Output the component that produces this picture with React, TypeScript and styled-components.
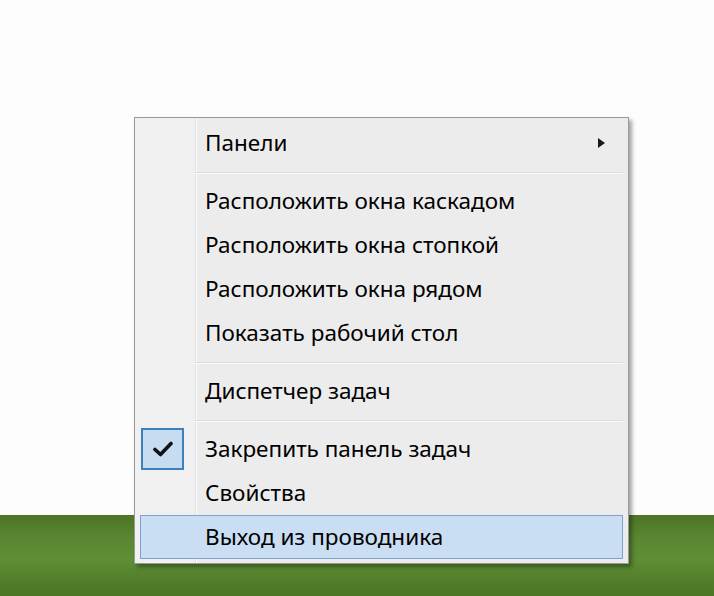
import React from 'react';
import styled, { createGlobalStyle } from 'styled-components';

const GlobalStyle = createGlobalStyle`
  html, body {
    margin: 0;
    padding: 0;
    background: #fdfdfd;
  }
  body {
    font-family: "Noto Sans", "Open Sans", "DejaVu Sans", sans-serif;
  }
`;

const Desktop = styled.div`
  position: relative;
  width: 714px;
  height: 596px;
  overflow: hidden;
  display: flex;
  flex-direction: column;
`;

const WhiteArea = styled.div`
  height: 515px;
  background: #fdfdfd;
`;

const GreenArea = styled.div`
  flex: 1;
  background:
    linear-gradient(180deg, #4d7526 0%, #5a8832 30%, #5e8e35 55%, #527f2b 80%, #4b7725 100%);
`;

const Menu = styled.div`
  position: absolute;
  left: 134px;
  top: 117px;
  width: 495px;
  box-sizing: border-box;
  padding: 3px 5px 4px 5px;
  border: 1px solid #9a9a9a;
  background: linear-gradient(
    to right,
    #f0f0f0 0,
    #f0f0f0 60px,
    #e0e0e0 60px,
    #e0e0e0 61px,
    #fbfbfb 61px,
    #fbfbfb 62px,
    #ececec 62px
  );
  box-shadow: 3px 3px 4px rgba(0, 0, 0, 0.35);
`;

const Item = styled.div<{ $active?: boolean }>`
  height: 44px;
  box-sizing: border-box;
  display: grid;
  grid-template-columns: 44px 1fr auto;
  align-items: center;
  border: 1px solid ${p => (p.$active ? '#7da2ce' : 'transparent')};
  background: ${p => (p.$active ? '#c9def3' : 'transparent')};
`;

const Gutter = styled.div<{ $checked?: boolean }>`
  width: 43px;
  height: 42px;
  box-sizing: border-box;
  display: flex;
  align-items: center;
  justify-content: center;
  border: 2px solid ${p => (p.$checked ? '#3d80bd' : 'transparent')};
  background: ${p => (p.$checked ? '#c6ddf1' : 'transparent')};
`;

const Label = styled.span`
  padding-left: 20px;
  font-size: 22.5px;
  line-height: 1;
  color: #000;
  white-space: nowrap;
`;

const Arrow = styled.span`
  width: 0;
  height: 0;
  margin-right: 17px;
  border-top: 5.5px solid transparent;
  border-bottom: 5.5px solid transparent;
  border-left: 7px solid #1a1a1a;
`;

const Separator = styled.div`
  height: 14px;
  display: flex;
  align-items: center;
  padding-left: 55px;

  &::after {
    content: '';
    flex: 1;
    height: 1px;
    background: #dcdcdc;
    box-shadow: 0 1px 0 #fafafa;
  }
`;

const Check = () => (
  <svg width="20" height="16" viewBox="0 0 20 16">
    <path d="M2 8.5 L7.5 13.5 L18 2.5" fill="none" stroke="#111" strokeWidth="3.6" strokeLinecap="round" strokeLinejoin="round" />
  </svg>
);

type Entry =
  | { kind: 'sep' }
  | { kind: 'item'; label: string; checked?: boolean; submenu?: boolean; active?: boolean };

const entries: Entry[] = [
  { kind: 'item', label: 'Панели', submenu: true },
  { kind: 'sep' },
  { kind: 'item', label: 'Расположить окна каскадом' },
  { kind: 'item', label: 'Расположить окна стопкой' },
  { kind: 'item', label: 'Расположить окна рядом' },
  { kind: 'item', label: 'Показать рабочий стол' },
  { kind: 'sep' },
  { kind: 'item', label: 'Диспетчер задач' },
  { kind: 'sep' },
  { kind: 'item', label: 'Закрепить панель задач', checked: true },
  { kind: 'item', label: 'Свойства' },
  { kind: 'item', label: 'Выход из проводника', active: true },
];

export default function App() {
  return (
    <>
      <GlobalStyle />
      <Desktop>
        <WhiteArea />
        <GreenArea />
        <Menu>
          {entries.map((e, i) =>
            e.kind === 'sep' ? (
              <Separator key={i} />
            ) : (
              <Item key={i} $active={e.active}>
                <Gutter $checked={e.checked}>{e.checked && <Check />}</Gutter>
                <Label>{e.label}</Label>
                {e.submenu ? <Arrow /> : <span />}
              </Item>
            )
          )}
        </Menu>
      </Desktop>
    </>
  );
}
